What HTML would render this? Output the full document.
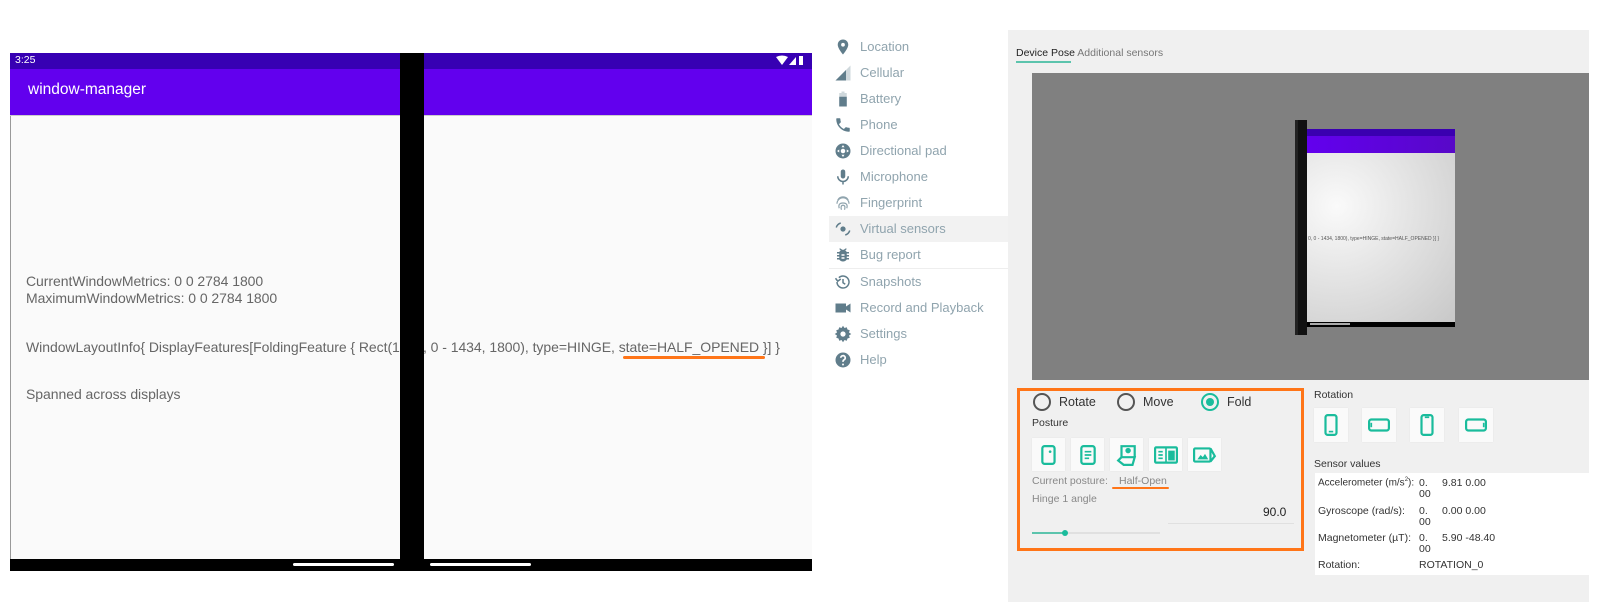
<!DOCTYPE html>
<html><head><meta charset="utf-8"><style>
*{margin:0;padding:0;box-sizing:border-box}
body{width:1600px;height:614px;background:#fff;position:relative;overflow:hidden;font-family:"Liberation Sans",sans-serif}
.a{position:absolute}
.t{position:absolute;white-space:nowrap}
.ph{color:#666;font-size:14px;letter-spacing:-0.05px}
.mi{position:absolute;left:829px;width:179px;height:26px}
.mi .tx{position:absolute;left:31px;top:5px;font-size:13px;color:#90a4ae}
.mi svg{position:absolute;left:5px;top:4px}
.s{font-size:10.5px;color:#333}
.btn{position:absolute;background:#fafafa;box-shadow:0 0 1px #ddd}
.btn svg{position:absolute;left:50%;top:50%;transform:translate(-50%,-50%)}
.rad{position:absolute;width:18px;height:18px;border:2px solid #555;border-radius:50%}
</style></head><body>
<div class="a" style="left:10px;top:53px;width:802px;height:518px;background:#fafafa;border-left:1px solid #999"></div>
<div class="a" style="left:10px;top:53px;width:802px;height:16px;background:#3700b3"></div>
<div class="a" style="left:10px;top:69px;width:802px;height:46px;background:#6200ee"></div>
<div class="a" style="left:10px;top:115px;width:802px;height:1px;background:#ccc"></div>
<div class="t" style="left:15px;top:54px;color:#fff;font-size:10.5px">3:25</div>
<svg class="a" style="left:776px;top:55px" width="30" height="11"><path d="M0 2 Q6 -1 12 2 L6 10Z" fill="#fff"/><path d="M13 10 L20 2 L20 10Z" fill="#fff"/><rect x="23" y="1" width="4" height="9" fill="#fff"/></svg>
<div class="t" style="left:28px;top:81px;color:#fff;font-size:15.5px">window-manager</div>
<div class="t ph" style="left:26px;top:273px">CurrentWindowMetrics: 0 0 2784 1800</div>
<div class="t ph" style="left:26px;top:290px">MaximumWindowMetrics: 0 0 2784 1800</div>
<div class="t ph" style="left:26px;top:339px">WindowLayoutInfo{ DisplayFeatures[FoldingFeature { Rect(1350, 0 - 1434, 1800), type=HINGE, state=HALF_OPENED }] }</div>
<div class="a" style="left:623px;top:356px;width:142px;height:3px;background:#ff7518;border-radius:2px"></div>
<div class="t ph" style="left:26px;top:386px">Spanned across displays</div>
<div class="a" style="left:10px;top:559px;width:802px;height:12px;background:#000"></div>
<div class="a" style="left:293px;top:563px;width:101px;height:3px;background:#fff;border-radius:2px"></div>
<div class="a" style="left:430px;top:563px;width:101px;height:3px;background:#fff;border-radius:2px"></div>
<div class="a" style="left:400px;top:53px;width:24px;height:518px;background:#000"></div>

<div class="mi" style="top:34px"><svg width="18" height="18" viewBox="0 0 24 24"><path d="M12 2C8 2 5 5 5 9c0 5 7 13 7 13s7-8 7-13c0-4-3-7-7-7zm0 9.5a2.5 2.5 0 1 1 0-5 2.5 2.5 0 0 1 0 5z" fill="#607d8b"/></svg><span class="tx">Location</span></div>
<div class="mi" style="top:60px"><svg width="18" height="18" viewBox="0 0 24 24"><path d="M2 22L22 2v20z" fill="#cfd8dc"/><path d="M2 22L16 8v14z" fill="#607d8b"/></svg><span class="tx">Cellular</span></div>
<div class="mi" style="top:86px"><svg width="18" height="18" viewBox="0 0 24 24"><path d="M10 2h4v2h3v18H7V4h3z" fill="#cfd8dc"/><path d="M7 9h10v13H7z" fill="#607d8b"/></svg><span class="tx">Battery</span></div>
<div class="mi" style="top:112px"><svg width="18" height="18" viewBox="0 0 24 24"><path d="M6.6 10.8c1.4 2.8 3.8 5.1 6.6 6.6l2.2-2.2c.3-.3.7-.4 1-.2 1.1.4 2.3.6 3.6.6.6 0 1 .4 1 1V20c0 .6-.4 1-1 1C10.6 21 3 13.4 3 4c0-.6.4-1 1-1h3.5c.6 0 1 .4 1 1 0 1.3.2 2.5.6 3.6.1.3 0 .7-.2 1z" fill="#607d8b"/></svg><span class="tx">Phone</span></div>
<div class="mi" style="top:138px"><svg width="18" height="18" viewBox="0 0 24 24"><circle cx="12" cy="12" r="10" fill="#607d8b"/><circle cx="12" cy="12" r="3" fill="#fff"/><path d="M12 4l2 3h-4zM12 20l2-3h-4zM4 12l3 2v-4zM20 12l-3 2v-4z" fill="#fff"/></svg><span class="tx">Directional pad</span></div>
<div class="mi" style="top:164px"><svg width="18" height="18" viewBox="0 0 24 24"><rect x="9" y="2" width="6" height="12" rx="3" fill="#607d8b"/><path d="M5 11a7 7 0 0 0 14 0M12 18v4" stroke="#607d8b" stroke-width="2" fill="none"/></svg><span class="tx">Microphone</span></div>
<div class="mi" style="top:190px"><svg width="18" height="18" viewBox="0 0 24 24" fill="none" stroke="#90a4ae" stroke-width="1.6"><path d="M5 8a8 8 0 0 1 14 0M4 13a8 8 0 0 1 16 0M7 19c-1-3-1-7 5-7s6 4 5 7M10 21c-1-2-1-6 2-6s3 3 2 6"/></svg><span class="tx">Fingerprint</span></div>
<div class="mi" style="top:216px;background:#f2f2f2"><svg width="18" height="18" viewBox="0 0 24 24"><circle cx="12" cy="12" r="3.5" fill="#607d8b"/><path d="M3 10a9 9 0 0 1 6-6M21 14a9 9 0 0 1-6 6" stroke="#607d8b" stroke-width="2" fill="none"/></svg><span class="tx">Virtual sensors</span></div>
<div class="mi" style="top:242px"><svg width="18" height="18" viewBox="0 0 24 24"><path d="M20 8h-3a6 6 0 0 0-2-2l2-2-1-1-3 2h-2L8 3 7 4l2 2a6 6 0 0 0-2 2H4v2h3v2H4v2h3v2H4v2h3a6 6 0 0 0 10 0h3v-2h-3v-2h3v-2h-3v-2h3z" fill="#607d8b"/><path d="M10 12h4M10 16h4" stroke="#fff" stroke-width="2"/></svg><span class="tx">Bug report</span></div>
<div class="a" style="left:829px;top:268px;width:179px;height:1px;background:#eee"></div>
<div class="mi" style="top:269px"><svg width="18" height="18" viewBox="0 0 24 24" fill="none" stroke="#607d8b" stroke-width="2"><path d="M4 12a8 8 0 1 0 2.5-5.8"/><path d="M2 7l3 4 4-3" /><path d="M12 8v5l3 2"/></svg><span class="tx">Snapshots</span></div>
<div class="mi" style="top:295px"><svg width="18" height="18" viewBox="0 0 24 24"><rect x="2" y="6" width="14" height="12" fill="#607d8b"/><path d="M16 10l6-4v12l-6-4z" fill="#607d8b"/></svg><span class="tx">Record and Playback</span></div>
<div class="mi" style="top:321px"><svg width="18" height="18" viewBox="0 0 24 24"><path d="M12 1l2 3 3-1 1 3 3 1-1 3 3 2-3 2 1 3-3 1-1 3-3-1-2 3-2-3-3 1-1-3-3-1 1-3-3-2 3-2-1-3 3-1 1-3 3 1z" fill="#607d8b"/><circle cx="12" cy="12" r="3.5" fill="#fff"/></svg><span class="tx">Settings</span></div>
<div class="mi" style="top:347px"><svg width="18" height="18" viewBox="0 0 24 24"><circle cx="12" cy="12" r="10" fill="#607d8b"/><path d="M9 9a3 3 0 1 1 4 3c-1 .5-1 1-1 2.5" stroke="#fff" stroke-width="2.2" fill="none"/><circle cx="12" cy="18" r="1.3" fill="#fff"/></svg><span class="tx">Help</span></div>

<div class="a" style="left:1008px;top:30px;width:581px;height:572px;background:#f0f0f0"></div>
<div class="t" style="left:1016px;top:47px;font-size:10.5px;color:#222">Device Pose <span style="color:#777">Additional sensors</span></div>
<div class="a" style="left:1016px;top:61px;width:55px;height:2px;background:#5cc4ad"></div>
<div class="a" style="left:1032px;top:73px;width:557px;height:307px;background:#808080"></div>
<div class="a" style="left:1295px;top:120px;width:12px;height:215px;background:#111;border-left:3px solid #222"></div>
<div class="a" style="left:1307px;top:129px;width:148px;height:193px;background:radial-gradient(ellipse at 20% 40%,#fafafa,#c8c8c8)"></div>
<div class="a" style="left:1307px;top:129px;width:148px;height:7px;background:#3a00b0"></div>
<div class="a" style="left:1307px;top:136px;width:148px;height:17px;background:linear-gradient(90deg,#6200ee,#5808c8)"></div>
<div class="t" style="left:1308px;top:236px;font-size:5px;color:#555">0, 0 - 1434, 1800), type=HINGE, state=HALF_OPENED }] }</div>
<div class="a" style="left:1307px;top:322px;width:148px;height:5px;background:#000"></div>
<div class="a" style="left:1310px;top:323px;width:40px;height:2px;background:#aaa"></div>

<div class="a" style="left:1017px;top:388px;width:287px;height:163px;border:3px solid #ff7518"></div>
<div class="rad" style="left:1033px;top:393px"></div><div class="t s" style="left:1059px;top:395px;font-size:12.5px">Rotate</div>
<div class="rad" style="left:1117px;top:393px"></div><div class="t s" style="left:1143px;top:395px;font-size:12.5px">Move</div>
<div class="rad" style="left:1201px;top:393px;border-color:#1abc9c"><div class="a" style="left:3px;top:3px;width:8px;height:8px;border-radius:50%;background:#1abc9c"></div></div><div class="t s" style="left:1227px;top:395px;font-size:12.5px">Fold</div>
<div class="t s" style="left:1032px;top:417px;font-size:10.5px">Posture</div>
<div class="btn" style="left:1032px;top:438px;width:33px;height:33px"><svg width="18" height="20" viewBox="0 0 16 18"><rect x="2" y="1" width="11" height="16" rx="2" fill="none" stroke="#1abc9c" stroke-width="2"/><circle cx="9" cy="6" r="1.2" fill="#1abc9c"/></svg></div>
<div class="btn" style="left:1071px;top:438px;width:33px;height:33px"><svg width="18" height="20" viewBox="0 0 16 18"><rect x="2" y="1" width="12" height="16" rx="2" fill="none" stroke="#1abc9c" stroke-width="2"/><path d="M5 6h6M5 9h6M5 12h4" stroke="#1abc9c" stroke-width="1.5"/></svg></div>
<div class="btn" style="left:1110px;top:438px;width:33px;height:33px"><svg width="22" height="22" viewBox="0 0 20 20" fill="none" stroke="#1abc9c" stroke-width="2"><path d="M5 12V2h12v10"/><path d="M5 12l-3 3 5 4h8l2-7z"/><circle cx="11" cy="6" r="1.5" fill="#1abc9c"/></svg></div>
<div class="btn" style="left:1149px;top:438px;width:33px;height:33px"><svg width="24" height="18" viewBox="0 0 22 16"><rect x="1" y="1" width="20" height="14" rx="1" fill="none" stroke="#1abc9c" stroke-width="2"/><path d="M11 1v14" stroke="#1abc9c" stroke-width="1.5"/><path d="M4 5h4M4 8h4M4 11h4" stroke="#1abc9c" stroke-width="1.5"/><rect x="13" y="4" width="6" height="9" fill="#1abc9c"/></svg></div>
<div class="btn" style="left:1188px;top:438px;width:33px;height:33px"><svg width="24" height="18" viewBox="0 0 22 16" fill="none" stroke="#1abc9c" stroke-width="2"><rect x="1" y="2" width="15" height="12" rx="1"/><path d="M16 2l4 7-4 5"/><path d="M4 12l3-4 2 2 2-3 3 5z" fill="#1abc9c" stroke="none"/></svg></div>
<div class="t" style="left:1032px;top:475px;font-size:10.5px;color:#888">Current posture:</div>
<div class="t" style="left:1119px;top:475px;font-size:10.5px;color:#888">Half-Open</div>
<div class="a" style="left:1112px;top:487px;width:57px;height:2px;background:#ff7518;border-radius:1px"></div>
<div class="t" style="left:1032px;top:493px;font-size:10.5px;color:#888">Hinge 1 angle</div>
<div class="t" style="left:1263px;top:505px;font-size:12px;color:#222">90.0</div>
<div class="a" style="left:1168px;top:523px;width:126px;height:1px;background:#e0e0e0"></div>
<div class="a" style="left:1032px;top:532px;width:128px;height:2px;background:#e0e0e0"></div>
<div class="a" style="left:1032px;top:532px;width:33px;height:2px;background:#5cc4ad"></div>
<div class="a" style="left:1062px;top:530px;width:6px;height:6px;border-radius:50%;background:#1abc9c"></div>

<div class="t s" style="left:1314px;top:389px;font-size:10.5px">Rotation</div>
<div class="btn" style="left:1314px;top:408px;width:34px;height:34px"><svg width="14" height="22" viewBox="0 0 12 20"><rect x="1" y="1" width="10" height="18" rx="2" fill="none" stroke="#1abc9c" stroke-width="2"/><path d="M4 16h4" stroke="#1abc9c" stroke-width="1.5"/></svg></div>
<div class="btn" style="left:1362px;top:408px;width:34px;height:34px"><svg width="22" height="14" viewBox="0 0 20 12"><rect x="1" y="1" width="18" height="10" rx="2" fill="none" stroke="#1abc9c" stroke-width="2"/><path d="M3 4v4" stroke="#1abc9c" stroke-width="1.5"/></svg></div>
<div class="btn" style="left:1410px;top:408px;width:34px;height:34px"><svg width="14" height="22" viewBox="0 0 12 20"><rect x="1" y="1" width="10" height="18" rx="2" fill="none" stroke="#1abc9c" stroke-width="2"/><path d="M4 3h4" stroke="#1abc9c" stroke-width="1.5"/></svg></div>
<div class="btn" style="left:1459px;top:408px;width:34px;height:34px"><svg width="22" height="14" viewBox="0 0 20 12"><rect x="1" y="1" width="18" height="10" rx="2" fill="none" stroke="#1abc9c" stroke-width="2"/><path d="M17 4v4" stroke="#1abc9c" stroke-width="1.5"/></svg></div>
<div class="t s" style="left:1314px;top:458px;font-size:10.5px">Sensor values</div>
<div class="a" style="left:1315px;top:473px;width:274px;height:102px;background:#fff"></div>
<div class="t s" style="left:1318px;top:477px;font-size:10px">Accelerometer (m/s<sup style="font-size:6px">2</sup>):</div>
<div class="t s" style="left:1419px;top:477px">0.</div><div class="t s" style="left:1419px;top:488px">00</div><div class="t s" style="left:1442px;top:477px">9.81 0.00</div>
<div class="t s" style="left:1318px;top:505px">Gyroscope (rad/s):</div>
<div class="t s" style="left:1419px;top:505px">0.</div><div class="t s" style="left:1419px;top:516px">00</div><div class="t s" style="left:1442px;top:505px">0.00 0.00</div>
<div class="t s" style="left:1318px;top:532px">Magnetometer (µT):</div>
<div class="t s" style="left:1419px;top:532px">0.</div><div class="t s" style="left:1419px;top:543px">00</div><div class="t s" style="left:1442px;top:532px">5.90 -48.40</div>
<div class="t s" style="left:1318px;top:559px">Rotation:</div>
<div class="t s" style="left:1419px;top:559px">ROTATION_0</div>
</body></html>
